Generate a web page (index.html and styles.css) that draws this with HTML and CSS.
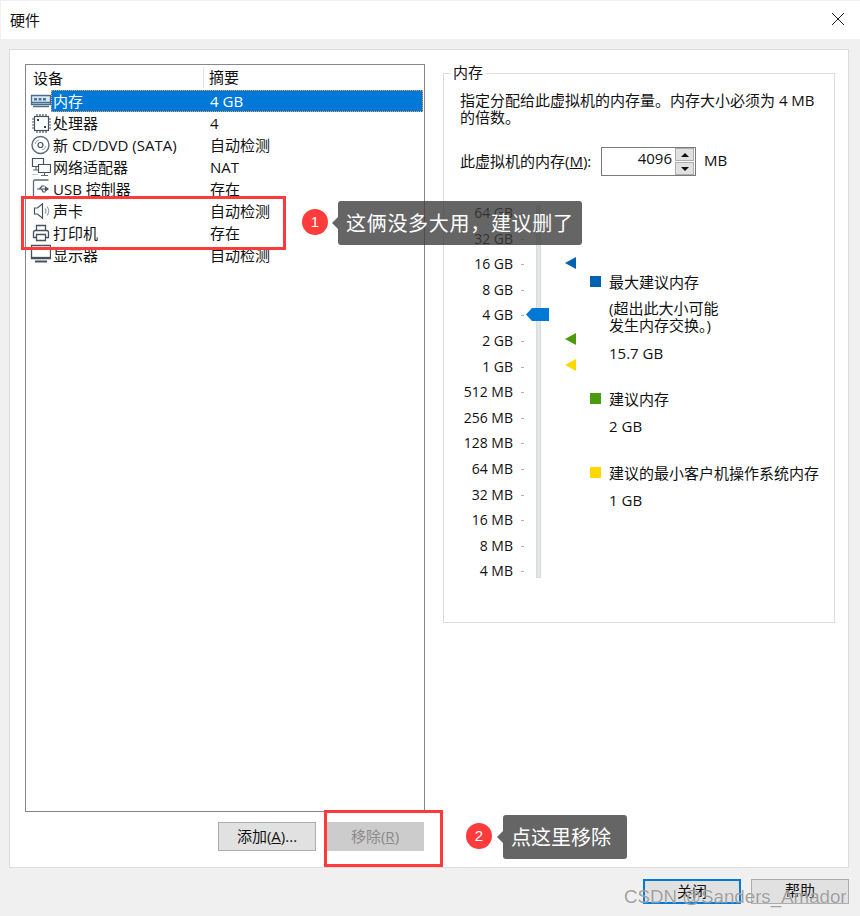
FILE: index.html
```html
<!DOCTYPE html>
<html lang="zh">
<head>
<meta charset="utf-8">
<title>硬件</title>
<link rel="stylesheet" href="styles.css">
</head>
<body>
<div class="window">
  <header class="titlebar">
    <span>硬件</span>
    <svg class="close" width="14" height="14" viewBox="0 0 14 14"><path d="M1 1l12 12M13 1L1 13" stroke="#222" fill="none"/></svg>
  </header>

  <main class="panel">
    <section class="left">
      <div class="list">
        <div class="list-head"><span class="h-dev">设备</span><span class="h-sum">摘要</span></div>
        <div class="row">
          <svg class="icon" width="24" height="22" viewBox="0 0 24 22"><path d="M4.500 5.500h19v9h-19z" fill="#dce7f0" stroke="#4a6d8c" stroke-width="1.300"/><path d="M7 8h3v2.500H7zM11.500 8h3v2.500h-3zM16 8h3v2.500h-3z" fill="#3f78ab"/><path d="M4 12.500h20M6 16.500h16" stroke="#4a6d8c" stroke-width="1.300"/></svg>
          <div class="cells sel"><span class="name">内存</span><span>4 GB</span></div>
        </div>
        <div class="row">
          <svg class="icon" width="24" height="22" viewBox="0 0 24 22"><rect x="7.500" y="4.500" width="14" height="14" fill="#fff" stroke="#46525e" stroke-width="1.200"/><path d="M5 7h2M5 10h2M5 13h2M5 16h2M22 7h2M22 10h2M22 13h2M22 16h2M10 2v2M13 2v2M16 2v2M19 2v2M10 19v2M13 19v2M16 19v2M19 19v2" stroke="#46525e" stroke-width="1.200"/><path d="M10 7h2v2h-2zM17 14h2v2h-2z" fill="#35424f"/></svg>
          <div class="cells"><span class="name">处理器</span><span>4</span></div>
        </div>
        <div class="row">
          <svg class="icon" width="24" height="22" viewBox="0 0 24 22"><circle cx="13.500" cy="11" r="8.500" fill="#fff" stroke="#5f6a74" stroke-width="1.400"/><circle cx="13.500" cy="11" r="2.500" fill="none" stroke="#46525e" stroke-width="1.200"/><path d="M8 10a5.500 5.500 0 0 1 4-4M19 12a5.500 5.500 0 0 1-4 4" fill="none" stroke="#98a1a9"/></svg>
          <div class="cells"><span class="name">新 CD/DVD (SATA)</span><span>自动检测</span></div>
        </div>
        <div class="row">
          <svg class="icon" width="24" height="22" viewBox="0 0 24 22"><path d="M5.500 2.500h11v8h-11z" fill="#fff" stroke="#46525e" stroke-width="1.200"/><path d="M11.500 8.500h12v8h-12z" fill="#fff" stroke="#46525e" stroke-width="1.200"/><path d="M17.500 16.500v3M14 19.500h7M9 11v3M6 14h5" stroke="#5f6a74" stroke-width="1.200"/><path d="M5.500 18.500h6" stroke="#98a1a9" stroke-dasharray="1 1"/></svg>
          <div class="cells"><span class="name">网络适配器</span><span>NAT</span></div>
        </div>
        <div class="row">
          <svg class="icon" width="24" height="22" viewBox="0 0 24 22"><path d="M21.500 20.500H8a1.500 1.500 0 0 1-1.500-1.500V3.500A1.500 1.500 0 0 1 8 2h13.500" fill="#fff" stroke="#5f6a74" stroke-width="1.300"/><path d="M10 11h11M21 11l-2.500-1.800v3.600zM12.500 11l2.500-3h2.500M14.500 11l1.500 3h2.500" fill="none" stroke="#46525e" stroke-width="1.200"/></svg>
          <div class="cells"><span class="name">USB 控制器</span><span>存在</span></div>
        </div>
        <div class="row">
          <svg class="icon" width="24" height="22" viewBox="0 0 24 22"><path d="M7.500 8h3L15.500 3.800v14.400L10.500 14h-3z" fill="#fff" stroke="#46525e" stroke-width="1.200"/><path d="M18 8.500a4 4 0 0 1 0 5M20 6.500a7 7 0 0 1 0 9" fill="none" stroke="#8a949c" stroke-width="1.100"/></svg>
          <div class="cells"><span class="name">声卡</span><span>自动检测</span></div>
        </div>
        <div class="row">
          <svg class="icon" width="24" height="22" viewBox="0 0 24 22"><path d="M9.500 8V3.500h9V8" fill="#fff" stroke="#46525e" stroke-width="1.300"/><path d="M8.500 8.500h11a2 2 0 0 1 2 2v5h-3M9.500 15.500h-3v-5a2 2 0 0 1 2-2" fill="#fff" stroke="#46525e" stroke-width="1.300"/><path d="M9.500 12.500h9v6h-9z" fill="#fff" stroke="#46525e" stroke-width="1.300"/></svg>
          <div class="cells"><span class="name">打印机</span><span>存在</span></div>
        </div>
        <div class="row">
          <svg class="icon" width="24" height="22" viewBox="0 0 24 22"><path d="M4.500 1.500h19v13h-19z" fill="#fff" stroke="#46525e" stroke-width="1.300"/><path d="M4.500 13.500h19" stroke="#46525e" stroke-width="1.300"/><path d="M8 17.500h12" stroke="#46525e" stroke-width="2"/></svg>
          <div class="cells"><span class="name">显示器</span><span>自动检测</span></div>
        </div>
      </div>
      <div class="actions">
        <button class="btn">添加(<u>A</u>)...</button>
        <button class="btn off">移除(<u>R</u>)</button>
      </div>
    </section>

    <section class="group">
      <div class="legend">内存</div>
      <p class="desc">指定分配给此虚拟机的内存量。内存大小必须为 4 MB<br>的倍数。</p>
      <div class="mem-row">
        <span class="mem-label">此虚拟机的内存(<u>M</u>):</span>
        <div class="spin">
          <span class="spin-val">4096</span>
          <div class="spin-btns">
            <span class="spin-btn"><i class="up"></i></span>
            <span class="spin-btn"><i class="down"></i></span>
          </div>
        </div>
        <span class="unit">MB</span>
      </div>
      <div class="slider">
        <ul class="scale">
          <li>64 GB</li><li>32 GB</li><li>16 GB</li><li>8 GB</li><li>4 GB</li><li>2 GB</li><li>1 GB</li><li>512 MB</li><li>256 MB</li><li>128 MB</li><li>64 MB</li><li>32 MB</li><li>16 MB</li><li>8 MB</li><li>4 MB</li>
        </ul>
        <div class="track">
          <div class="thumb"></div>
          <i class="pin pin-max"></i>
          <i class="pin pin-rec"></i>
          <i class="pin pin-min"></i>
        </div>
        <div class="info">
          <div class="info-title"><i class="sq sq-blue"></i>最大建议内存</div>
          <p class="note">(超出此大小可能<br>发生内存交换。)</p>
          <p class="val">15.7 GB</p>
          <div class="info-title t3"><i class="sq sq-green"></i>建议内存</div>
          <p class="val v2">2 GB</p>
          <div class="info-title t2"><i class="sq sq-yellow"></i>建议的最小客户机操作系统内存</div>
          <p class="val v2">1 GB</p>
        </div>
      </div>
    </section>
  </main>

  <footer class="footer">
    <button class="btn small focus">关闭</button>
    <button class="btn small">帮助</button>
  </footer>
</div>

<div class="mark mark-a"></div>
<div class="mark mark-b"></div>
<div class="badge badge-a">1</div>
<div class="tip tip-a">这俩没多大用，建议删了</div>
<div class="badge badge-b">2</div>
<div class="tip tip-b">点这里移除</div>
<div class="watermark">CSDN @Sanders_Amador</div>
</body>
</html>
```

FILE: styles.css
```css
* { box-sizing: border-box; }
html, body { margin: 0; padding: 0; }
body {
  width: 860px;
  height: 916px;
  overflow: hidden;
  position: relative;
  background: #f0f0f0;
  font-family: "Open Sans", "Noto Sans CJK SC", sans-serif;
  font-size: 15px;
  color: #111;
}
p, ul { margin: 0; padding: 0; }
.window { height: 916px; border-bottom: 1px solid #e0e0e0; }

.titlebar {
  height: 38px;
  margin: 1px 0 0 1px;
  padding: 0 15px 2px 9px;
  background: #fff;
  display: flex;
  align-items: center;
  justify-content: space-between;
}

.panel {
  width: 840px;
  height: 819px;
  margin: 10px 0 0 9px;
  padding: 14px 0 0 15px;
  background: #fff;
  border: 1px solid #dcdcdc;
  display: flex;
}
.left { width: 400px; }
.list {
  height: 748px;
  border: 1px solid #828790;
  background: #fff;
}
.list-head { height: 25px; display: flex; align-items: center; position: relative; }
.h-dev { width: 177px; padding-left: 7px; }
.h-sum { padding-left: 5px; border-left: 1px solid #e5e5e5; height: 21px; line-height: 21px; }
.row { height: 22px; display: flex; }
.icon { width: 24px; height: 22px; margin-left: 1px; flex: none; }
.cells { flex: 1; display: flex; align-items: center; padding-left: 2px; margin-right: 1px; line-height: 22px; }
.name { width: 157px; }
.sel { background: #0078d7; color: #fff; outline: 1px dotted #f0a040; outline-offset: -1px; }

.actions { display: flex; justify-content: flex-end; gap: 10px; margin-top: 10px; padding-right: 1px; }
.btn {
  width: 98px;
  height: 29px;
  padding: 0 0 3px;
  font: inherit;
  color: #111;
  background: #e1e1e1;
  border: 1px solid #adadad;
}
.btn.off { background: #ccc; border-color: #ccc; color: #8a8a8a; }
.btn.small { height: 25px; line-height: 21px; }
.btn.focus { border: 2px solid #0078d7; }

.group {
  width: 392px;
  height: 550px;
  margin: 9px 0 0 18px;
  padding: 0 0 0 16px;
  border: 1px solid #dcdcdc;
}
.legend {
  width: fit-content;
  margin: -13px 0 0 -10px;
  padding: 0 3px;
  height: 22px;
  line-height: 22px;
  background: #fff;
}
.desc { margin-top: 9px; line-height: 17px; }
.mem-row { display: flex; align-items: center; margin-top: 21px; height: 29px; }
.mem-label { width: 141px; padding-bottom: 3px; }
.spin {
  width: 95px;
  height: 29px;
  border: 1px solid #7a7a7a;
  display: flex;
  justify-content: flex-end;
  padding: 0 1px 0 0;
}
.spin-val { padding: 0 3px 3px 0; line-height: 20px; }
.spin-btns { width: 19px; display: flex; flex-direction: column; gap: 1px; }
.spin-btn { flex: 1; background: #e1e1e1; border: 1px solid #adadad; display: flex; align-items: center; justify-content: center; }
.spin-btn i { width: 0; height: 0; border-left: 4px solid transparent; border-right: 4px solid transparent; }
.up { border-bottom: 4px solid #111; }
.down { border-top: 4px solid #111; }
.unit { margin-left: 8px; padding-bottom: 3px; }

.slider { display: flex; margin-top: 24px; }
.scale { list-style: none; width: 54px; height: 384px; }
.scale li {
  height: 25.6px;
  line-height: 25.6px;
  text-align: right;
  font-size: 14px;
  position: relative;
  margin-left: -16px;
  left: -1px;
}
.scale li::after {
  content: "";
  position: absolute;
  right: -11px;
  top: 13px;
  width: 3px;
  height: 1px;
  background: #b0b0b0;
}
.track {
  width: 5px;
  height: 373px;
  margin: 5px 0 0 22px;
  background: #e3e6e6;
  border: 1px solid #d8dbdb;
  position: relative;
}
.thumb {
  position: absolute;
  left: -11px;
  top: 102px;
  width: 23px;
  height: 13px;
  background: #0078d7;
  clip-path: polygon(0 50%, 6px 0, 100% 0, 100% 100%, 6px 100%);
}
.pin {
  position: absolute;
  left: 28px;
  width: 0;
  height: 0;
  border-top: 6px solid transparent;
  border-bottom: 6px solid transparent;
  border-right-width: 11px;
  border-right-style: solid;
}
.pin-max { top: 51px; border-right-color: #0063b1; }
.pin-rec { top: 127px; border-right-color: #4c9a0e; }
.pin-min { top: 153px; border-right-color: #ffd800; }

.info { margin: 70px 0 0 49px; width: 240px; }
.info-title { position: relative; padding-left: 19px; line-height: 24px; height: 24px; white-space: nowrap; }
.sq { position: absolute; left: 0; top: 6px; width: 11px; height: 11px; }
.sq-blue { background: #0063b1; }
.sq-green { background: #4c9a0e; }
.sq-yellow { background: #ffd800; }
.note { margin: 6px 0 0 19px; line-height: 17px; }
.val { margin: 8px 0 0 19px; line-height: 22px; }
.t2 { margin-top: 24px; }
.t3 { margin-top: 23px; }
.v2 { margin-top: 4px; }

.footer { display: flex; justify-content: flex-end; gap: 10px; margin-top: 11px; padding-right: 11px; }

.mark { position: absolute; border: 3px solid #ff3a3a; }
.mark-a { left: 21px; top: 196px; width: 265px; height: 54px; }
.mark-b { left: 324px; top: 810px; width: 119px; height: 57px; }

.badge {
  position: absolute;
  width: 26px;
  height: 26px;
  border-radius: 50%;
  background: #ff3b3b;
  color: #fff;
  font-family: "Liberation Sans", sans-serif;
  font-size: 15px;
  line-height: 26px;
  text-align: center;
}
.badge-a { left: 302px; top: 209px; }
.badge-b { left: 466px; top: 823px; }

.tip {
  position: absolute;
  height: 44px;
  padding: 0 8px;
  line-height: 43px;
  background: rgba(60, 60, 60, 0.79);
  border-radius: 3px;
  color: #fff;
  font-family: "Noto Sans CJK SC", sans-serif;
  font-size: 20px;
  white-space: nowrap;
}
.tip::before {
  content: "";
  position: absolute;
  left: -6px;
  top: 16px;
  border-top: 6px solid transparent;
  border-bottom: 6px solid transparent;
  border-right: 6px solid rgba(60, 60, 60, 0.79);
}
.tip-a { left: 338px; top: 201px; width: 244px; letter-spacing: 0.7px; }
.tip-b { left: 503px; top: 815px; width: 124px; }

.watermark {
  position: absolute;
  left: 624px;
  top: 885px;
  font-family: "Liberation Sans", sans-serif;
  font-size: 18.7px;
  line-height: 24px;
  color: rgba(130, 130, 130, 0.75);
  text-shadow: 0 0 1px rgba(255, 255, 255, 0.8);
  white-space: nowrap;
}
```
